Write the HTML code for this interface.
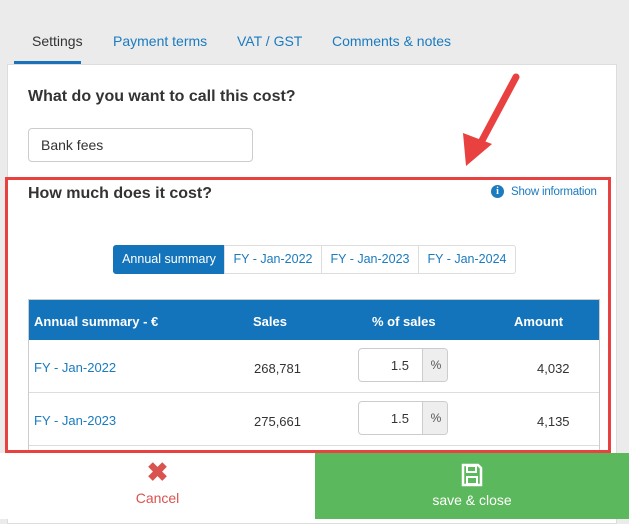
<!DOCTYPE html>
<html><head><style>
*{margin:0;padding:0;box-sizing:border-box}
body{width:629px;height:519px;overflow:hidden;background:#ebebeb;font-family:"Liberation Sans",Arial,sans-serif;position:relative;font-size:14px}
.a{position:absolute}
.tab{position:absolute;top:33px;font-size:14px;color:#1a7bbf}
.panel{position:absolute;left:7px;top:64px;width:610px;height:460px;background:#fff;border:1px solid #ddd}
h3{position:absolute;font-size:16px;font-weight:bold;color:#333}
.seg{position:absolute;top:245px;height:29px;border:1px solid #ddd;font-size:12.5px;color:#1a7bbf;line-height:27px;text-align:center}
.row{position:absolute;left:29px;width:570px;border-bottom:1px solid #ddd;height:53px}
.inp{position:absolute;left:329px;width:90px;height:34px;border:1px solid #ccc;border-radius:4px;overflow:hidden}
</style></head><body>
<div class="tab" style="left:32px;color:#333">Settings</div>
<div class="a" style="left:14px;top:61px;width:67px;height:3px;background:#1a73ba"></div>
<div class="tab" style="left:113px">Payment terms</div>
<div class="tab" style="left:237px">VAT / GST</div>
<div class="tab" style="left:332px">Comments &amp; notes</div>
<div class="panel"></div>
<h3 style="left:28px;top:88px">What do you want to call this cost?</h3>
<div class="a" style="left:28px;top:128px;width:225px;height:34px;border:1px solid #ccc;border-radius:4px;padding:8px 12px;color:#333">Bank fees</div>
<h3 style="left:28px;top:185px">How much does it cost?</h3>
<div class="a" style="left:491px;top:185px;width:13px;height:13px;border-radius:50%;background:#1a7bbf;color:#fff;font-size:10px;font-weight:bold;text-align:center;line-height:13px;font-family:'Liberation Serif',serif">i</div>
<div class="a" style="left:511px;top:186px;font-size:11.5px;color:#1a7bbf;letter-spacing:-0.2px">Show information</div>
<div class="seg" style="left:113px;width:112px;background:#1474bb;border-color:#1474bb;color:#fff;border-radius:3px 0 0 3px">Annual summary</div>
<div class="seg" style="left:224px;width:98px">FY - Jan-2022</div>
<div class="seg" style="left:321px;width:98px">FY - Jan-2023</div>
<div class="seg" style="left:418px;width:98px;border-radius:0 3px 3px 0">FY - Jan-2024</div>
<div class="a" style="left:28px;top:299px;width:572px;height:160px;border:1px solid #ccc"></div>
<div class="a" style="left:29px;top:300px;width:570px;height:40px;background:#1474bb;color:#fff;font-weight:bold;font-size:13px">
<span class="a" style="left:5px;top:14px">Annual summary - €</span>
<span class="a" style="left:224px;top:14px">Sales</span>
<span class="a" style="left:343px;top:14px">% of sales</span>
<span class="a" style="left:485px;top:14px">Amount</span></div>
<div class="row" style="top:340px"><span class="a" style="left:5px;top:20px;color:#1a7bbf;font-size:13px">FY - Jan-2022</span><span class="a" style="left:225px;top:21px;color:#333;font-size:13px">268,781</span>
<div class="inp" style="top:8px"><span class="a" style="right:38px;top:9px;color:#333;font-size:13px">1.5</span><span class="a" style="left:63px;top:0;width:27px;height:34px;background:#eee;border-left:1px solid #ccc;text-align:center;line-height:32px;font-size:12px;color:#555">%</span></div>
<span class="a" style="left:508px;top:21px;color:#333;font-size:13px">4,032</span></div>
<div class="row" style="top:393px"><span class="a" style="left:5px;top:20px;color:#1a7bbf;font-size:13px">FY - Jan-2023</span><span class="a" style="left:225px;top:21px;color:#333;font-size:13px">275,661</span>
<div class="inp" style="top:8px"><span class="a" style="right:38px;top:9px;color:#333;font-size:13px">1.5</span><span class="a" style="left:63px;top:0;width:27px;height:34px;background:#eee;border-left:1px solid #ccc;text-align:center;line-height:32px;font-size:12px;color:#555">%</span></div>
<span class="a" style="left:508px;top:21px;color:#333;font-size:13px">4,135</span></div>
<div class="a" style="left:5px;top:177px;width:606px;height:276px;border:3px solid #e8413f"></div>
<svg class="a" style="left:0;top:0" width="629" height="519"><line x1="516" y1="77" x2="478" y2="148" stroke="#e8413f" stroke-width="7" stroke-linecap="round"/><polygon points="466,166 463,133 492,144" fill="#e8413f"/></svg>
<div class="a" style="left:0;top:453px;width:315px;height:66px;background:#fff;text-align:center;color:#d9534f">
<div style="font-size:26px;font-weight:bold;margin-top:6px;line-height:26px">✖</div><div style="margin-top:5px">Cancel</div></div>
<div class="a" style="left:315px;top:453px;width:314px;height:66px;background:#5cb85c;text-align:center;color:#fff">
<svg width="22" height="24" style="margin-top:10px" viewBox="0 0 22 24"><path d="M2 2h15l3 3v17H2z" fill="none" stroke="#fff" stroke-width="2.5"/><rect x="6" y="3" width="9" height="6" fill="none" stroke="#fff" stroke-width="2"/><rect x="6" y="14" width="10" height="7" fill="none" stroke="#fff" stroke-width="2"/></svg>
<div style="margin-top:2px">save &amp; close</div></div>
</body></html>
